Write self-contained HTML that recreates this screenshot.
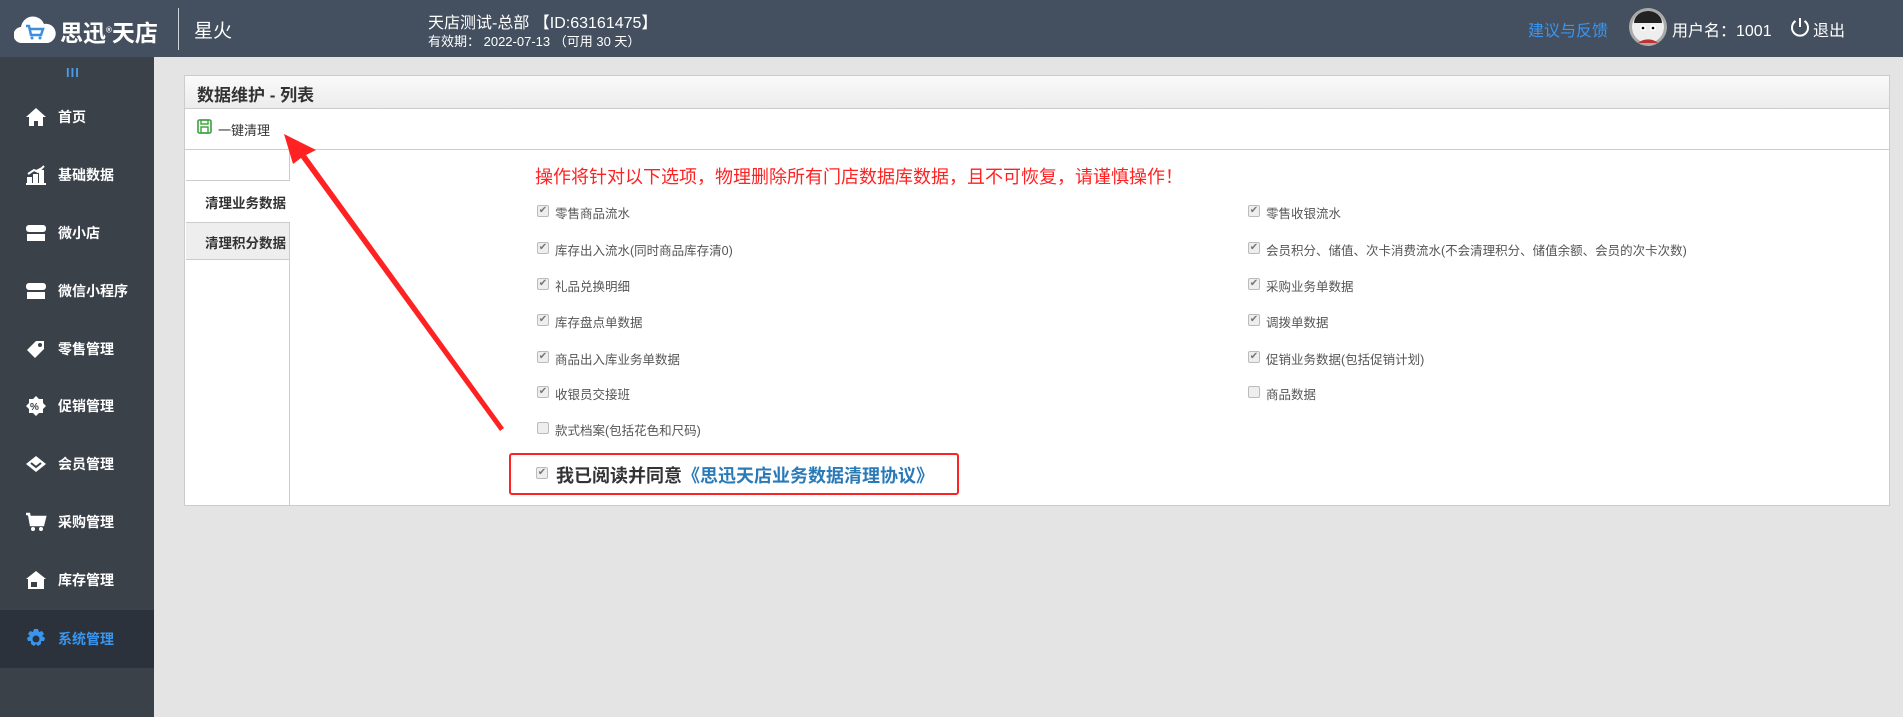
<!DOCTYPE html>
<html><head><meta charset="utf-8"><style>
*{margin:0;padding:0;box-sizing:border-box}
body{width:1903px;height:717px;overflow:hidden;font-family:"Liberation Sans","Noto Sans CJK SC",sans-serif;background:#e4e4e4;position:relative}
.hdr{position:absolute;left:0;top:0;width:1903px;height:57px;background:#44505f;color:#fff}
.abs{position:absolute;white-space:nowrap}
.side{position:absolute;left:0;top:57px;width:154px;height:660px;background:#3a4149}
.mi{position:absolute;left:0;width:154px;height:58px;color:#fff;font-weight:bold;font-size:14px}
.mi span{position:absolute;left:58px;top:50%;transform:translateY(-50%)}
.mi svg{position:absolute;left:25px;top:50%;transform:translateY(-50%)}
.panel{position:absolute;left:184px;top:75px;width:1706px;height:431px;background:#fff;border:1px solid #ccc}
.ph{height:33px;background:linear-gradient(#fafafa,#ececec);border-bottom:1px solid #ccc;font-size:17px;font-weight:bold;color:#333;padding:5px 0 0 12px}
.cb{position:absolute;width:12px;height:12px;border:1px solid #bbb;border-radius:2px;background:#eee;font-size:10px;color:#777;text-align:center;line-height:10px}
.lb{position:absolute;font-size:12.5px;color:#555;white-space:nowrap}
</style></head><body>
<div class="hdr">
 <svg class="abs" style="left:14px;top:14px" width="42" height="30" viewBox="0 0 42 30"><path d="M8 29a8 8 0 0 1-1-16 12 12 0 0 1 23-3 9 9 0 0 1 4 19z" fill="#fff"/><path d="M12 12h3l2 9h10l2-6H16" stroke="#3d8fdd" stroke-width="2.5" fill="none"/><circle cx="18" cy="24" r="1.5" fill="#3d8fdd"/><circle cx="26" cy="24" r="1.5" fill="#3d8fdd"/></svg>
 <div class="abs" style="left:60px;top:14px;font-size:23px;font-weight:bold;color:#fff">思迅<sup style="font-size:8px">®</sup>天店</div>
 <div class="abs" style="left:178px;top:8px;width:1px;height:42px;background:#cfd4da"></div>
 <div class="abs" style="left:194px;top:16px;font-size:19px">星火</div>
 <div class="abs" style="left:428px;top:9px;font-size:16px">天店测试-总部 【ID:63161475】</div>
 <div class="abs" style="left:428px;top:31px;font-size:13px">有效期： 2022-07-13 （可用 30 天）</div>
 <div class="abs" style="left:1528px;top:17px;font-size:16px;color:#3a95ee">建议与反馈</div>
 <svg class="abs" style="left:1628px;top:7px" width="40" height="40" viewBox="0 0 40 40"><circle cx="20" cy="20" r="19" fill="#aaa"/><circle cx="20" cy="20" r="16" fill="#eee"/><path d="M6 16a14 12 0 0 1 28 0z" fill="#222"/><path d="M10 36a12 8 0 0 1 20 0z" fill="#b33"/><circle cx="15" cy="21" r="3" fill="#fff"/><circle cx="25" cy="21" r="3" fill="#fff"/><circle cx="15" cy="21" r="1.3" fill="#000"/><circle cx="25" cy="21" r="1.3" fill="#000"/></svg>
 <div class="abs" style="left:1672px;top:17px;font-size:16px">用户名：1001</div>
 <svg class="abs" style="left:1789px;top:16px" width="22" height="22" viewBox="0 0 22 22"><path d="M6.5 5a8 8 0 1 0 9 0" stroke="#fff" stroke-width="2" fill="none"/><path d="M11 2v9" stroke="#fff" stroke-width="2"/></svg>
 <div class="abs" style="left:1813px;top:17px;font-size:16px">退出</div>
</div>
<div class="side">
 <div class="abs" style="left:66px;top:8px;font-size:13px;color:#4a9ae8;font-weight:bold;letter-spacing:1px">III</div>
 <div class="mi" style="top:31px"><svg width="22" height="20" viewBox="0 0 22 20"><path d="M11 1L1 10h3v9h5v-5h4v5h5v-9h3z" fill="#fff"/></svg><span>首页</span></div>
 <div class="mi" style="top:89px"><svg width="22" height="20" viewBox="0 0 22 20"><path d="M1 19h20M3 18v-5h3v5M9 18v-8h3v8M15 18V6h3v12M3 9l6-4 4 2 6-6" stroke="#fff" stroke-width="2" fill="#fff"/></svg><span>基础数据</span></div>
 <div class="mi" style="top:147px"><svg width="22" height="20" viewBox="0 0 22 20"><rect x="1" y="2" width="20" height="7" rx="3" fill="#fff"/><rect x="2" y="11" width="18" height="7" fill="#fff"/></svg><span>微小店</span></div>
 <div class="mi" style="top:205px"><svg width="22" height="20" viewBox="0 0 22 20"><rect x="1" y="2" width="20" height="7" rx="3" fill="#fff"/><rect x="2" y="11" width="18" height="7" fill="#fff"/></svg><span>微信小程序</span></div>
 <div class="mi" style="top:263px"><svg width="22" height="20" viewBox="0 0 22 20"><path d="M2 11l9-9h8v8l-9 9z" fill="#fff"/><circle cx="15" cy="6" r="2" fill="#3a4149"/></svg><span>零售管理</span></div>
 <div class="mi" style="top:320px"><svg width="22" height="22" viewBox="0 0 22 22"><path d="M11 1l3 3h4v4l3 3-3 3v4h-4l-3 3-3-3H4v-4l-3-3 3-3V4h4z" fill="#fff"/><text x="5" y="15" font-size="10" font-weight="bold" fill="#3a4149">%</text></svg><span>促销管理</span></div>
 <div class="mi" style="top:378px"><svg width="22" height="20" viewBox="0 0 22 20"><path d="M11 2L1 10l10 8 10-8z" fill="#fff"/><path d="M6 9l5 4 5-4" stroke="#3a4149" stroke-width="2" fill="none"/></svg><span>会员管理</span></div>
 <div class="mi" style="top:436px"><svg width="22" height="20" viewBox="0 0 22 20"><path d="M1 2h3l2 11h12l2-8H5" stroke="#fff" stroke-width="2.5" fill="#fff"/><circle cx="8" cy="17" r="2" fill="#fff"/><circle cx="16" cy="17" r="2" fill="#fff"/></svg><span>采购管理</span></div>
 <div class="mi" style="top:494px"><svg width="22" height="20" viewBox="0 0 22 20"><path d="M11 1L1 9h2v10h16V9h2z" fill="#fff"/><rect x="6" y="12" width="6" height="5" fill="#3a4149"/></svg><span>库存管理</span></div>
 <div class="mi" style="top:553px;background:#2b323b;color:#3a95ee"><svg width="22" height="22" viewBox="0 0 22 22"><path d="M9 1h4l1 3 3-1 2 3-2 2 3 2-1 3-3 0 0 3-3 2-2-2-2 2-3-2 0-3-3 0-1-3 3-2-2-2 2-3 3 1z" fill="#3a95ee"/><circle cx="11" cy="11" r="3.5" fill="#2b323b"/></svg><span>系统管理</span></div>
</div>
<div class="panel">
 <div class="ph">数据维护 - 列表</div>
 <div style="height:41px;border-bottom:1px solid #ccc;position:relative">
  <svg class="abs" style="left:12px;top:10px" width="15" height="15" viewBox="0 0 15 15"><rect x="1" y="1" width="13" height="13" rx="1.5" stroke="#3aa03a" stroke-width="1.6" fill="none"/><rect x="4" y="1" width="7" height="4" stroke="#3aa03a" stroke-width="1.4" fill="none"/><rect x="4" y="8" width="7" height="6" stroke="#3aa03a" stroke-width="1.4" fill="none"/></svg>
  <div class="abs" style="left:33px;top:11px;font-size:13px;color:#333">一键清理</div>
 </div>
 <div class="abs" style="left:104px;top:74px;width:1px;height:356px;background:#ccc"></div>
 <div class="abs" style="left:1px;top:74px;width:103px;height:31px;border-bottom:1px solid #ccc"></div>
 <div class="abs" style="left:1px;top:105px;width:104px;height:41px;background:#fff;font-size:13.5px;font-weight:bold;color:#333;padding:11px 0 0 19px">清理业务数据</div>
 <div class="abs" style="left:1px;top:146px;width:103px;height:38px;background:#eee;border-top:1px solid #ccc;border-bottom:1px solid #ccc;font-size:13.5px;font-weight:bold;color:#333;padding:9px 0 0 19px">清理积分数据</div>
 <div class="abs" style="left:350px;top:87px;font-size:18px;color:#f22">操作将针对以下选项，物理删除所有门店数据库数据，且不可恢复，请谨慎操作！</div>
</div>
<div id="items"></div>
<div class="abs" style="left:509px;top:453px;width:450px;height:42px;border:2px solid #f22;border-radius:3px"></div>
<div class="cb" style="left:536px;top:467px">✔</div>
<div class="abs" style="left:556px;top:462px;font-size:18px;font-weight:bold;color:#333">我已阅读并同意<span style="color:#2a7ab8">《思迅天店业务数据清理协议》</span></div>
<svg class="abs" style="left:0;top:0" width="1903" height="717"><polygon points="284,134 316,150 306,155 504,428 500,431 301,158 293,164" fill="#f22"/></svg>
<script>
var c1=["零售商品流水","库存出入流水(同时商品库存清0)","礼品兑换明细","库存盘点单数据","商品出入库业务单数据","收银员交接班","款式档案(包括花色和尺码)"];
var c2=["零售收银流水","会员积分、储值、次卡消费流水(不会清理积分、储值余额、会员的次卡次数)","采购业务单数据","调拨单数据","促销业务数据(包括促销计划)","商品数据"];
var ys=[211,248,284,320,357,392,428],h="";
c1.forEach(function(t,i){h+='<div class="cb" style="left:537px;top:'+(ys[i]-6)+'px">'+(i<6?'✔':'')+'</div><div class="lb" style="left:555px;top:'+(ys[i]-8)+'px">'+t+'</div>';});
c2.forEach(function(t,i){h+='<div class="cb" style="left:1248px;top:'+(ys[i]-6)+'px">'+(i<5?'✔':'')+'</div><div class="lb" style="left:1266px;top:'+(ys[i]-8)+'px">'+t+'</div>';});
document.getElementById('items').innerHTML=h;
</script>
</body></html>
